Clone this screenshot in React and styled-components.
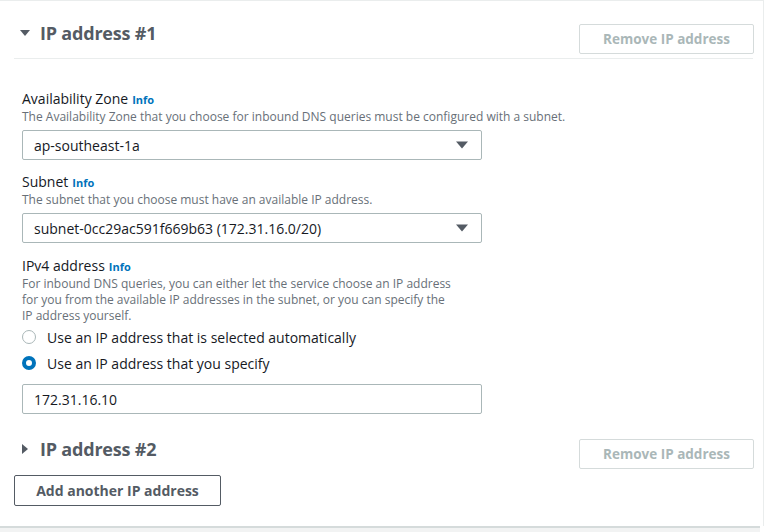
import React from 'react'
import styled, { createGlobalStyle } from 'styled-components'

const GlobalStyle = createGlobalStyle`
  html, body {
    margin: 0;
    padding: 0;
    background: #ffffff;
  }
  body {
    font-family: "Open Sans", "Noto Sans", Arial, sans-serif;
    color: #16191f;
  }
`

const Page = styled.div`
  width: 768px;
  height: 532px;
  overflow: hidden;
  display: flex;
  flex-direction: column;
  background: #fff;
`

const Panel = styled.div`
  flex: 1;
  margin-right: 4px;
  border-top: 1px solid #eaeded;
  border-right: 1px solid #eaeded;
  padding-top: 1px;
  display: flex;
  flex-direction: column;
`

const SectionHeader = styled.div`
  display: flex;
  align-items: flex-start;
  justify-content: space-between;
  margin: 0 10px 0 14px;
  box-sizing: border-box;
  padding-top: ${({ $pad }) => $pad}px;
  height: ${({ $height }) => $height}px;
  border-bottom: ${({ $divider }) => ($divider ? '1px solid #eaeded' : 'none')};
`

const HeaderTitle = styled.h2`
  display: flex;
  align-items: center;
  gap: 10px;
  margin: 0 0 0 6px;
  font-size: 18px;
  line-height: 24px;
  font-weight: 700;
  color: #545b64;
  letter-spacing: -0.2px;
`

const Caret = styled.svg`
  width: 10px;
  height: 10px;
  fill: #545b64;
`

const GhostButton = styled.button`
  width: 175px;
  height: 30px;
  border: 1px solid #d5dbdb;
  border-radius: 2px;
  background: #fff;
  color: #aab7b8;
  font-family: inherit;
  font-size: 13.5px;
  font-weight: 700;
  margin-right: -1px;
  margin-top: ${({ $offset }) => $offset || 0}px;
`

const Body = styled.div`
  padding: 31px 0 0 22px;
  display: flex;
  flex-direction: column;
`

const Field = styled.div`
  display: flex;
  flex-direction: column;
  margin-bottom: ${({ $gap }) => $gap ?? 13}px;
`

const Label = styled.div`
  font-size: 14px;
  line-height: 18px;
  color: #16191f;
  display: flex;
  align-items: baseline;
  gap: 4px;
`

const Info = styled.span`
  font-size: 11px;
  font-weight: 700;
  color: #0073bb;
`

const Hint = styled.div`
  font-size: 12px;
  line-height: 16px;
  color: #687078;
  max-width: ${({ $max }) => $max || 600}px;
  margin-bottom: ${({ $after }) => $after ?? 5}px;
`

const SelectBox = styled.div`
  width: 460px;
  height: 30px;
  box-sizing: border-box;
  border: 1px solid #aab7b8;
  border-radius: 2px;
  display: flex;
  align-items: center;
  justify-content: space-between;
  padding: 0 13px 0 11px;
  font-size: 14px;
  color: #16191f;
`

const TextInput = styled.div`
  width: 460px;
  height: 30px;
  box-sizing: border-box;
  border: 1px solid #aab7b8;
  border-radius: 2px;
  display: flex;
  align-items: center;
  padding: 0 11px;
  font-size: 14px;
  color: #16191f;
  margin-top: 8px;
`

const RadioRow = styled.div`
  display: flex;
  align-items: center;
  gap: 11px;
  height: 26px;
  font-size: 14px;
  color: #16191f;
`

const RadioDot = styled.span`
  width: 14px;
  height: 14px;
  box-sizing: border-box;
  border-radius: 50%;
  border: ${({ $checked }) => ($checked ? '4px solid #0073bb' : '1.5px solid #aab7b8')};
  background: #fff;
`

const Footer = styled.div`
  padding-left: 14px;
`

const OutlineButton = styled.button`
  width: 207px;
  height: 31px;
  border: 1px solid #545b64;
  border-radius: 2px;
  background: #fff;
  color: #545b64;
  font-family: inherit;
  font-size: 14px;
  font-weight: 700;
`

const BottomBar = styled.div`
  height: 4px;
  margin-right: 8px;
  border-top: 2px solid #d5dbdb;
  background: #f2f3f3;
`

function DownCaret({ size = 10 }) {
  return (
    <Caret viewBox="0 0 10 10" style={{ width: size, height: size }}>
      <path d="M0 2h10L5 8z" />
    </Caret>
  )
}

function RightCaret() {
  return (
    <Caret viewBox="0 0 10 10">
      <path d="M2 0v10l6-5z" />
    </Caret>
  )
}

const fields = [
  {
    label: 'Availability Zone',
    hint: 'The Availability Zone that you choose for inbound DNS queries must be configured with a subnet.',
    value: 'ap-southeast-1a',
    gap: 13,
  },
  {
    label: 'Subnet',
    hint: 'The subnet that you choose must have an available IP address.',
    value: 'subnet-0cc29ac591f669b63 (172.31.16.0/20)',
    gap: 14,
  },
]

export default function App() {
  return (
    <Page>
      <GlobalStyle />
      <Panel>
        <SectionHeader $height={57} $pad={19} $divider>
          <HeaderTitle>
            <DownCaret />
            IP address #1
          </HeaderTitle>
          <GhostButton $offset={3}>Remove IP address</GhostButton>
        </SectionHeader>
        <Body>
          {fields.map(field => (
            <Field key={field.label} $gap={field.gap}>
              <Label>
                {field.label} <Info>Info</Info>
              </Label>
              <Hint>{field.hint}</Hint>
              <SelectBox>
                {field.value}
                <DownCaret size={12} />
              </SelectBox>
            </Field>
          ))}
          <Field $gap={10}>
            <Label>
              IPv4 address <Info>Info</Info>
            </Label>
            <Hint $max={430} $after={0}>
              For inbound DNS queries, you can either let the service choose an IP address
              for you from the available IP addresses in the subnet, or you can specify the
              IP address yourself.
            </Hint>
            <RadioRow>
              <RadioDot />
              Use an IP address that is selected automatically
            </RadioRow>
            <RadioRow>
              <RadioDot $checked />
              Use an IP address that you specify
            </RadioRow>
            <TextInput>172.31.16.10</TextInput>
          </Field>
        </Body>
        <SectionHeader $height={51} $pad={13}>
          <HeaderTitle>
            <RightCaret />
            IP address #2
          </HeaderTitle>
          <GhostButton $offset={2}>Remove IP address</GhostButton>
        </SectionHeader>
        <Footer>
          <OutlineButton>Add another IP address</OutlineButton>
        </Footer>
      </Panel>
      <BottomBar />
    </Page>
  )
}
